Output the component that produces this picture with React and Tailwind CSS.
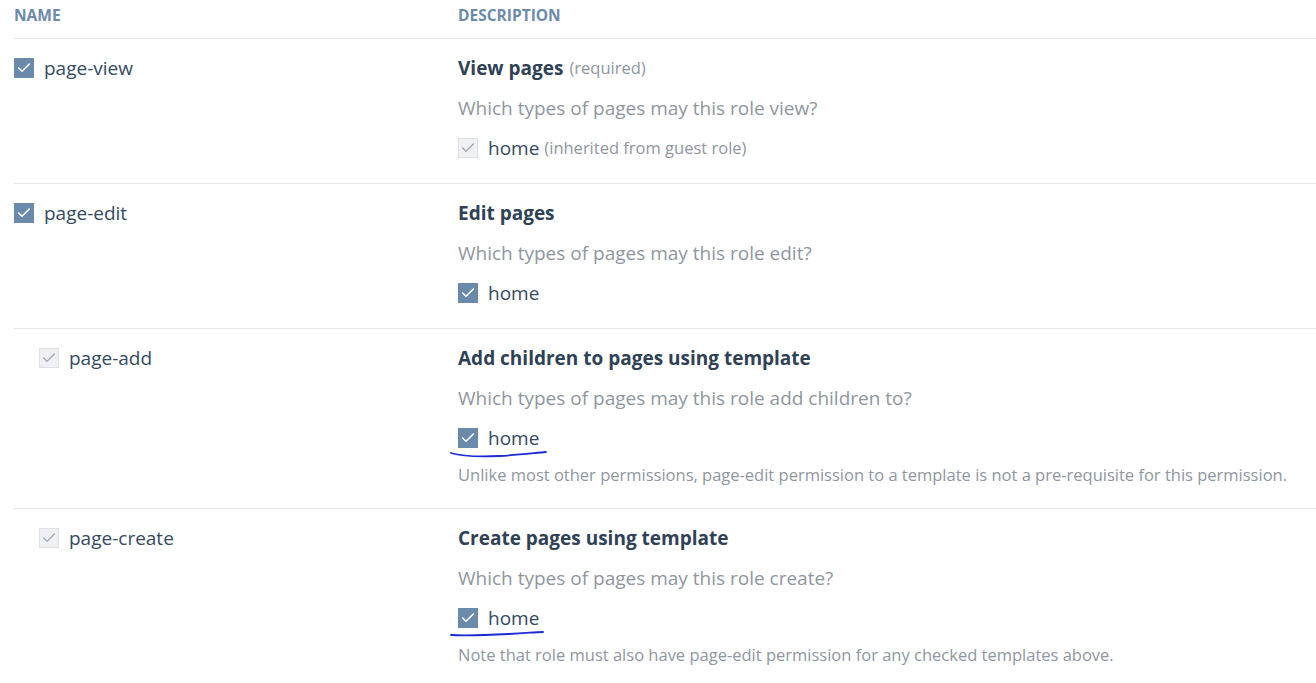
import { Check } from 'lucide-react'

const ROWS = [
  {
    name: 'page-view',
    nested: false,
    title: 'View pages',
    titleNote: '(required)',
    question: 'Which types of pages may this role view?',
    option: { label: 'home', note: '(inherited from guest role)', disabled: true },
  },
  {
    name: 'page-edit',
    nested: false,
    title: 'Edit pages',
    question: 'Which types of pages may this role edit?',
    option: { label: 'home' },
  },
  {
    name: 'page-add',
    nested: true,
    title: 'Add children to pages using template',
    question: 'Which types of pages may this role add children to?',
    option: { label: 'home', marked: 'a' },
    help: 'Unlike most other permissions, page-edit permission to a template is not a pre-requisite for this permission.',
  },
  {
    name: 'page-create',
    nested: true,
    title: 'Create pages using template',
    question: 'Which types of pages may this role create?',
    option: { label: 'home', marked: 'b' },
    help: 'Note that role must also have page-edit permission for any checked templates above.',
  },
]

function Box({ disabled }) {
  if (disabled) {
    return (
      <span className="w-5 h-5 shrink-0 flex items-center justify-center bg-[#eef0f3] border border-[#dde1e6]">
        <Check size={16} strokeWidth={1.8} className="text-[#9aa3ae]" />
      </span>
    )
  }
  return (
    <span className="w-5 h-5 shrink-0 flex items-center justify-center bg-[#6b8aab]">
      <Check size={16} strokeWidth={2.2} className="text-white" />
    </span>
  )
}

// hand-drawn blue underline from the screenshot annotation
function Scribble({ variant }) {
  const d = variant === 'a'
    ? 'M2 3 C 12 6, 30 7, 50 6 S 85 3, 97 2'
    : 'M2 5 C 20 6, 40 5, 60 4 S 85 2, 94 2'
  return (
    <svg className="absolute left-[-9px] top-[26px]" width="100" height="9" viewBox="0 0 100 9">
      <path d={d} fill="none" stroke="#1b2bd6" strokeWidth="1.8" strokeLinecap="round" />
    </svg>
  )
}

export default function App() {
  return (
    <div className="min-h-screen bg-white pl-[14px] font-['Open_Sans',sans-serif] text-[#354a5f]">
      <div className="grid grid-cols-[444px_1fr] border-b border-[#e3e6ea] h-[39px] pt-[4px] text-[15.5px] font-bold text-[#6b8aab]">
        <div>NAME</div>
        <div>DESCRIPTION</div>
      </div>
      {ROWS.map((row) => (
        <div key={row.name} className="grid grid-cols-[444px_1fr] border-b border-[#e3e6ea] pt-[9px] pb-[15px]">
          <div className={`flex items-center gap-[10px] h-10 text-[19px] ${row.nested ? 'pl-[25px]' : ''}`}>
            <Box disabled={row.nested} />
            <span>{row.name}</span>
          </div>
          <div>
            <div className="h-10 flex items-center text-[19px] font-bold text-[#2f4255]">
              {row.title}
              {row.titleNote && (
                <span className="ml-[6px] text-[16.5px] font-normal text-[#8f969f]">{row.titleNote}</span>
              )}
            </div>
            <div className="h-10 flex items-center text-[19px] text-[#8f969f]">{row.question}</div>
            <div className="h-10 flex items-center">
              <div className="relative flex items-center gap-[10px] text-[19px] text-[#354a5f]">
                <Box disabled={row.option.disabled} />
                <span>{row.option.label}</span>
                {row.option.note && (
                  <span className="text-[16.5px] text-[#8f969f] -ml-[5px]">{row.option.note}</span>
                )}
                {row.option.marked && <Scribble variant={row.option.marked} />}
              </div>
            </div>
            {row.help && (
              <div className="leading-[34px] pb-[1px] text-[16.5px] text-[#8f969f]">{row.help}</div>
            )}
          </div>
        </div>
      ))}
    </div>
  )
}
